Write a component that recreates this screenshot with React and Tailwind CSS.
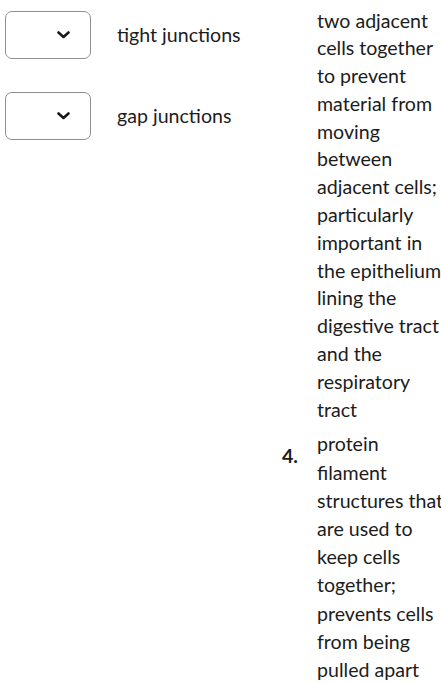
import React from 'react';

const font = { fontFamily: 'Lato, "Open Sans", sans-serif' };

// Definition text that is scrolled part-way: the top of item 3 is off screen
const item3 = [
  'two adjacent',
  'cells together',
  'to prevent',
  'material from',
  'moving',
  'between',
  'adjacent cells;',
  'particularly',
  'important in',
  'the epithelium',
  'lining the',
  'digestive tract',
  'and the',
  'respiratory',
  'tract',
];

const item4 = [
  'protein',
  'filament',
  'structures that',
  'are used to',
  'keep cells',
  'together;',
  'prevents cells',
  'from being',
  'pulled apart',
];

const Chevron = () => (
  <svg width="13" height="8" viewBox="0 0 13 8" fill="none">
    <path d="M1.5 1.5 L6.5 6 L11.5 1.5" stroke="#1a1a1a" strokeWidth="2.6" strokeLinecap="round" strokeLinejoin="round" />
  </svg>
);

const Select = () => (
  <div className="w-[86px] h-[48px] rounded-[7px] border border-[#8f8f8f] bg-white flex items-center justify-end pr-[20px] shrink-0">
    <Chevron />
  </div>
);

const Lines = ({ lines }) => (
  <div className="flex flex-col">
    {lines.map((l) => (
      <span key={l} className="block whitespace-nowrap h-[27.8px] leading-[27.8px]">{l}</span>
    ))}
  </div>
);

const LooseLines = ({ lines }) => (
  <div className="flex flex-col">
    {lines.map((l) => (
      <span key={l} className="block whitespace-nowrap h-[28.2px] leading-[28.2px]">{l}</span>
    ))}
  </div>
);

export default function App() {
  return (
    <div className="w-[441px] h-[683px] overflow-hidden bg-white text-[19.6px] text-[#1c1c1c]" style={font}>
      <div className="flex">
        {/* term column */}
        <div className="w-[280px] shrink-0 pl-[5px] pt-[11px] flex flex-col gap-[33px]">
          <div className="flex items-center gap-[26px]">
            <Select />
            <span className="pb-[1px] leading-[27.8px]">tight junctions</span>
          </div>
          <div className="flex items-center gap-[26px]">
            <Select />
            <span className="pb-[1px] leading-[27.8px]">gap junctions</span>
          </div>
        </div>

        {/* definition column */}
        <div className="flex flex-col pt-[6.5px] gap-[7px]">
          <div className="flex">
            <span className="w-[37px] shrink-0" />
            <Lines lines={item3} />
          </div>
          <div className="flex">
            <span className="w-[37px] shrink-0 pt-[12px] pl-[2px] font-bold leading-[27.8px]">4.</span>
            <LooseLines lines={item4} />
          </div>
        </div>
      </div>
    </div>
  );
}
